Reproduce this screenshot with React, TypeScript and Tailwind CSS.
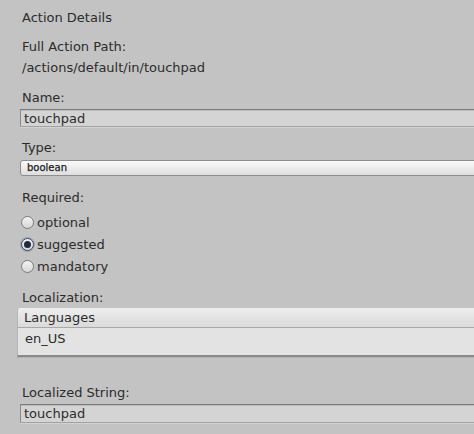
import React from "react";

const font = { fontFamily: '"DejaVu Sans", "Liberation Sans", sans-serif' };

function Label({ children, className = "" }: { children: React.ReactNode; className?: string }) {
  return <div className={`h-[15px] pl-[2px] whitespace-nowrap ${className}`}>{children}</div>;
}

function TextField({ value, className = "" }: { value: string; className?: string }) {
  return (
    <div
      className={`flex w-[500px] items-center border border-[#8a8a8a] border-t-[#7a7a7a] border-b-[#a2a2a2] bg-[#d4d4d4] pl-[3px] shadow-[inset_0_1px_0_#bdbdbd,0_1px_0_#d2d2d2] ${className}`}
    >
      <span className="leading-[15px]">{value}</span>
    </div>
  );
}

function Radio({ label, checked = false }: { label: string; checked?: boolean }) {
  return (
    <div className="flex h-[22px] items-center">
      <span
        className={`ml-[1px] flex h-[13px] w-[13px] items-center justify-center rounded-full border bg-gradient-to-b from-[#f4f4f4] to-[#d6d6d6] ${
          checked ? "border-[#3d4b5c] shadow-[0_0_0_1px_#9aa6b4]" : "border-[#7c7c7c]"
        }`}
      >
        {checked && <span className="h-[7px] w-[7px] rounded-full bg-[#1d2b40]" />}
      </span>
      <span className="ml-[3px] leading-[15px]">{label}</span>
    </div>
  );
}

export default function App() {
  return (
    <div
      className="h-[434px] w-[474px] overflow-hidden bg-[#c3c3c3] text-[13px] leading-[15px] text-[#2c2c2c]"
      style={font}
    >
      <div className="w-[540px] pl-[20px] pt-[10px]">
        <Label>Action Details</Label>
        <Label className="mt-[14px]">Full Action Path:</Label>
        <Label className="mt-[6px]">/actions/default/in/touchpad</Label>

        <Label className="mt-[15px]">Name:</Label>
        <TextField value="touchpad" className="mt-[4px] h-[18px]" />

        <Label className="mt-[13px]">Type:</Label>
        <div className="mt-[5px] flex h-[16px] w-[500px] items-center rounded-[3px] border border-[#8c8c8c] bg-gradient-to-b from-[#fafafa] to-[#dedede] pl-[6px]">
          <span className="text-[10px] leading-[12px] text-[#1e1e1e] [-webkit-text-stroke:0.25px_#1e1e1e]">boolean</span>
        </div>

        <Label className="mt-[14px]">Required:</Label>
        <div className="mt-[6px] flex flex-col">
          <Radio label="optional" />
          <Radio label="suggested" checked />
          <Radio label="mandatory" />
        </div>

        <Label className="mt-[13px]">Localization:</Label>
        <div className="ml-[-3px] mt-[3px] flex w-[510px] flex-col overflow-hidden rounded-tl-[3px] border-b-2 border-l border-[#8a8a8a] border-l-[#b4b4b4] bg-[#e3e3e3] shadow-[0_1px_0_#b2b2b2]">
          <div className="h-[20px] border-b border-[#a9a9a9] bg-gradient-to-b from-[#eeeeee] to-[#dadada] pl-[6px] pt-[2px]">
            Languages
          </div>
          <div className="h-[27px] pl-[7px] pt-[3px]">en_US</div>
        </div>

        <Label className="mt-[28px]">Localized String:</Label>
        <TextField value="touchpad" className="mt-[4px] h-[19px]" />
      </div>
    </div>
  );
}
